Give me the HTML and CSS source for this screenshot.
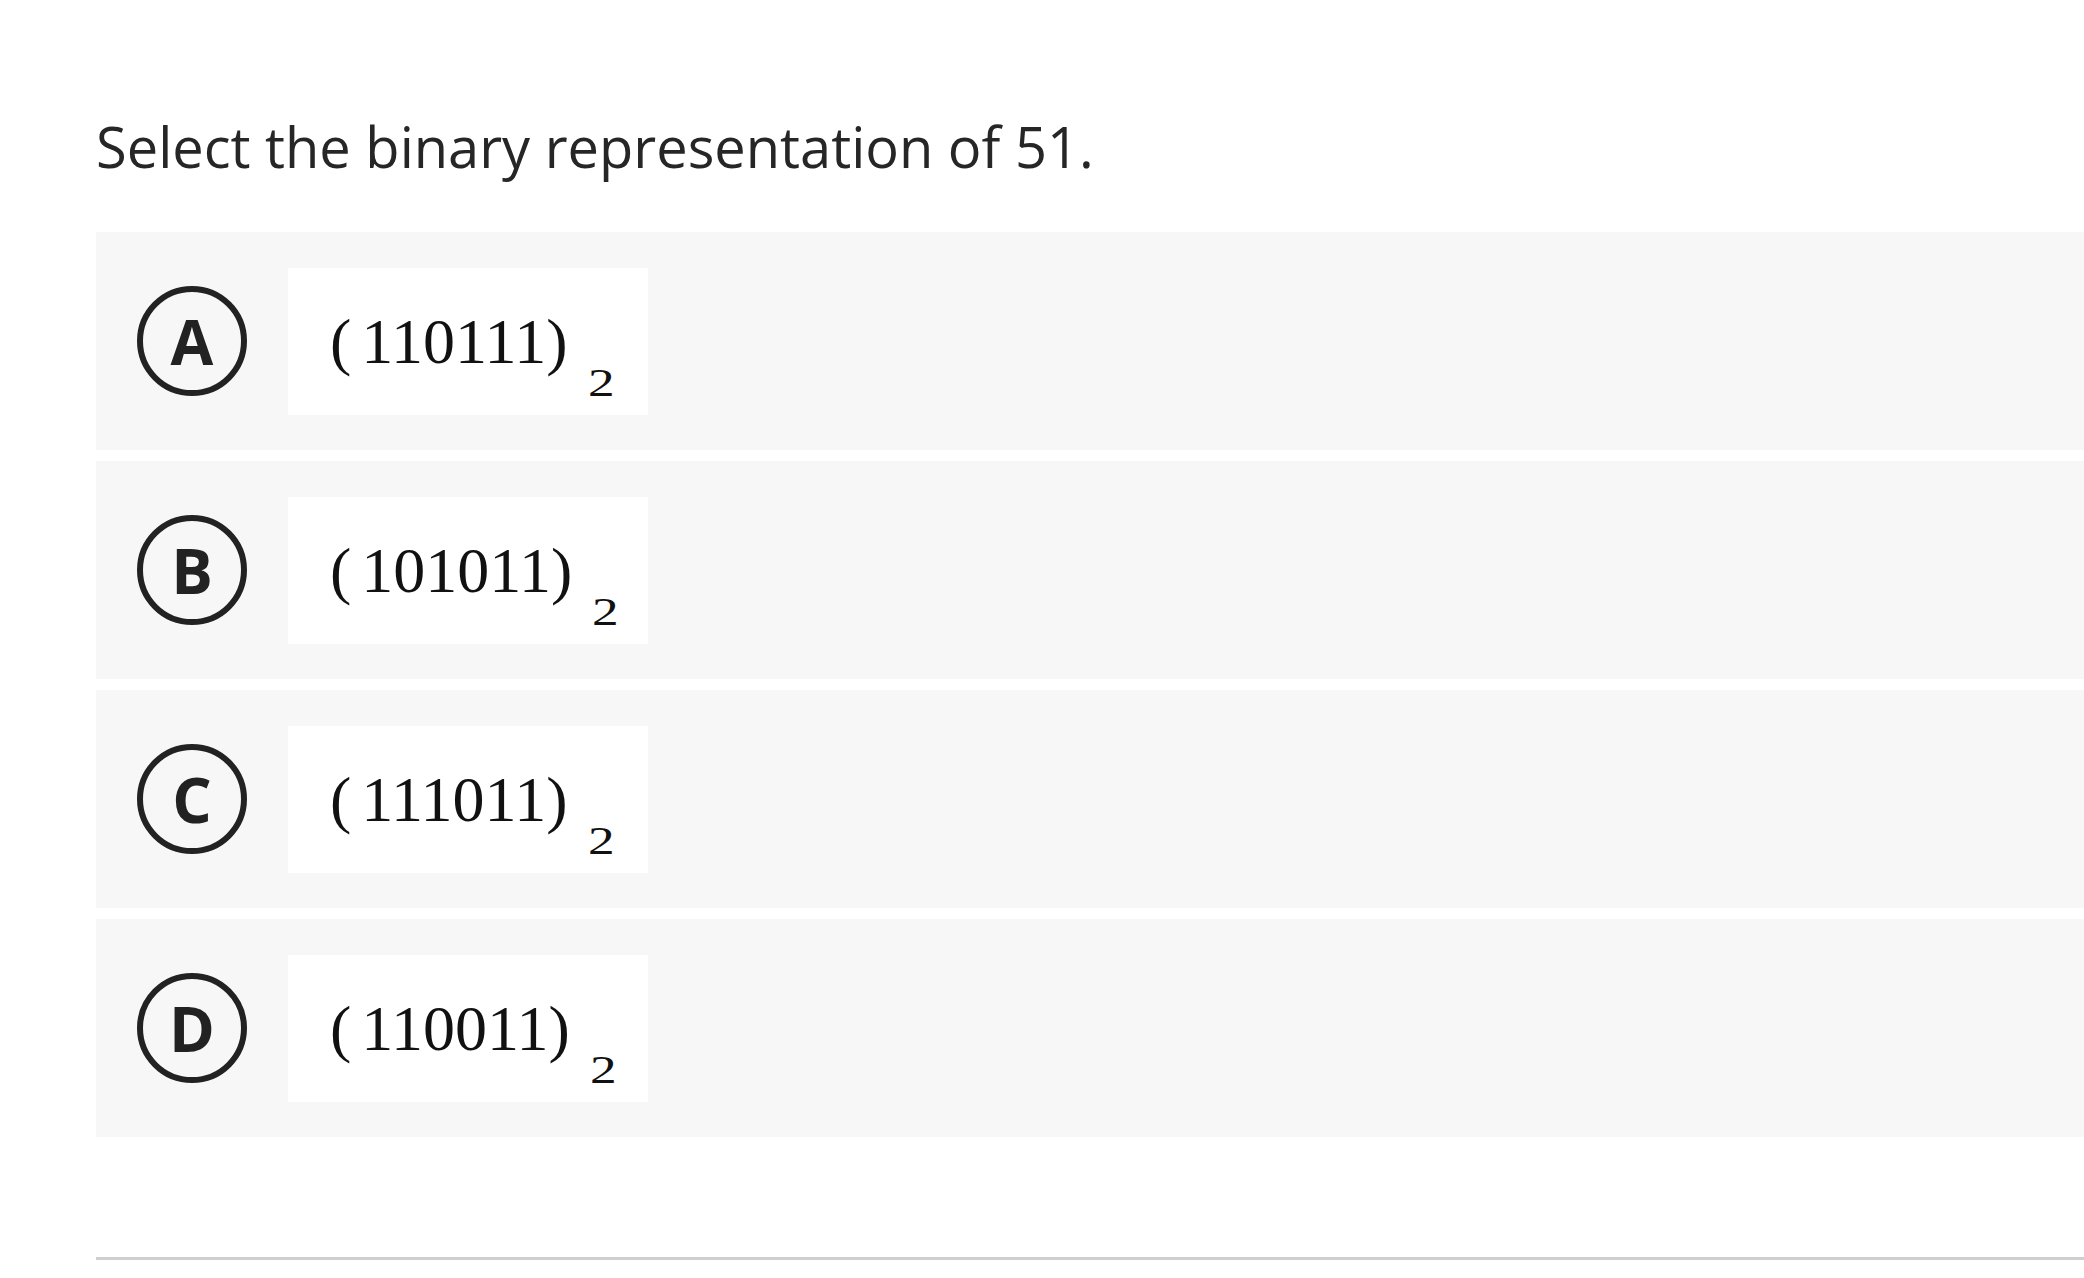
FILE: index.html
```html
<!DOCTYPE html>
<html lang="en">

<head>
    <meta charset="UTF-8">
    <meta name="viewport" content="width=device-width, initial-scale=1.0">
    <title>Question</title>

    <link rel="stylesheet" href="styles.css">
</head>

<body>
    <div id="page">
        <h1 class="question">Select the binary representation of 51.</h1>

        <div class="options">
            <div class="option">
                <span class="letter">A</span>
                <div class="value"><span class="paren">(</span>110111)<sub>2</sub></div>
            </div>
            <div class="option">
                <span class="letter">B</span>
                <div class="value"><span class="paren">(</span>101011)<sub>2</sub></div>
            </div>
            <div class="option">
                <span class="letter">C</span>
                <div class="value"><span class="paren">(</span>111011)<sub>2</sub></div>
            </div>
            <div class="option">
                <span class="letter">D</span>
                <div class="value"><span class="paren">(</span>110011)<sub>2</sub></div>
            </div>
        </div>

        <div class="rule"></div>
    </div>
</body>

</html>
```

FILE: styles.css
```css
* {
    padding: 0;
    margin: 0;
    box-sizing: border-box;
}

body {
    background: #fff;
    font-family: "Open Sans", "Liberation Sans", sans-serif;
    color: #222;
}

#page {
    padding: 108px 0 0 96px;
}

.question {
    font-size: 56px;
    font-weight: normal;
    line-height: 76px;
    color: #262626;
}

.options {
    display: flex;
    flex-direction: column;
    gap: 11px;
    margin-top: 48px;
}

.option {
    display: flex;
    align-items: center;
    gap: 41px;
    height: 218px;
    padding-left: 41px;
    background: #f7f7f7;
}

.letter {
    display: flex;
    align-items: center;
    justify-content: center;
    width: 110px;
    height: 110px;
    border: 6px solid #222;
    border-radius: 50%;
    font-size: 62px;
    font-weight: bold;
    line-height: 1;
    color: #222;
}

.value {
    width: 360px;
    height: 147px;
    padding-left: 42px;
    background: #fff;
    font-family: "Liberation Serif", "Times New Roman", serif;
    font-size: 64px;
    line-height: 147px;
    color: #111;
    white-space: nowrap;
}

.paren {
    margin-right: 10px;
}

.value sub {
    display: inline-block;
    margin-left: 20px;
    font-size: 41px;
    line-height: 0;
    vertical-align: -33px;
    transform: scaleX(1.3);
    transform-origin: left center;
}

.rule {
    margin-top: 120px;
    height: 3px;
    background: #cfcfcf;
}
```
